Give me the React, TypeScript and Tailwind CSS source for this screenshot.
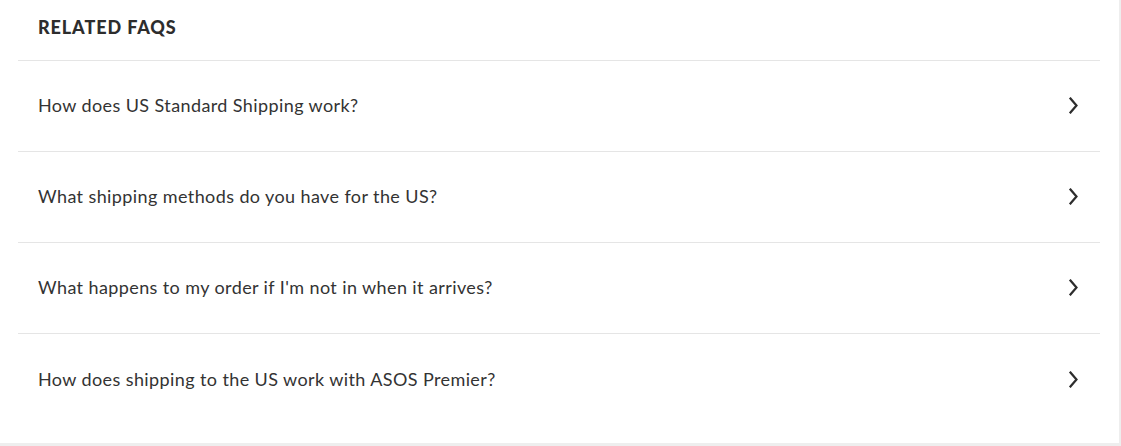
import React from 'react'

const faqs = [
  'How does US Standard Shipping work?',
  'What shipping methods do you have for the US?',
  "What happens to my order if I'm not in when it arrives?",
  'How does shipping to the US work with ASOS Premier?',
]

function Chevron() {
  return (
    <svg width="11" height="17" viewBox="0 0 11 17" fill="none" className="shrink-0">
      <path d="M2.5 1.5 L8.5 8.5 L2.5 15.5" stroke="#2d2d2d" strokeWidth="2.2" strokeLinecap="square" />
    </svg>
  )
}

export default function App() {
  return (
    <div className="w-[1121px] h-[446px] bg-[#eeeeee] overflow-hidden" style={{ fontFamily: '"Lato", "Open Sans", sans-serif' }}>
      <div className="w-[1119px] h-[443px] bg-white pl-[18px] pr-[19px]">
        {/* Header */}
        <div className="h-[61px] flex items-center border-b border-[#e5e5e5] pl-[20px] pb-[6px]">
          <h2 className="text-[18px] font-black tracking-[0.9px] text-[#2d2d2d] uppercase">Related FAQs</h2>
        </div>

        {/* List */}
        <ul>
          {faqs.map((q, i) => (
            <li
              key={q}
              className={`h-[91px] flex items-center justify-between pl-[20px] pr-[21px] pb-[1px] ${
                i < faqs.length - 1 ? 'border-b border-[#e5e5e5]' : ''
              }`}
            >
              <span className="text-[18px] text-[#333333] tracking-[0.4px]">{q}</span>
              <Chevron />
            </li>
          ))}
        </ul>
      </div>
    </div>
  )
}
